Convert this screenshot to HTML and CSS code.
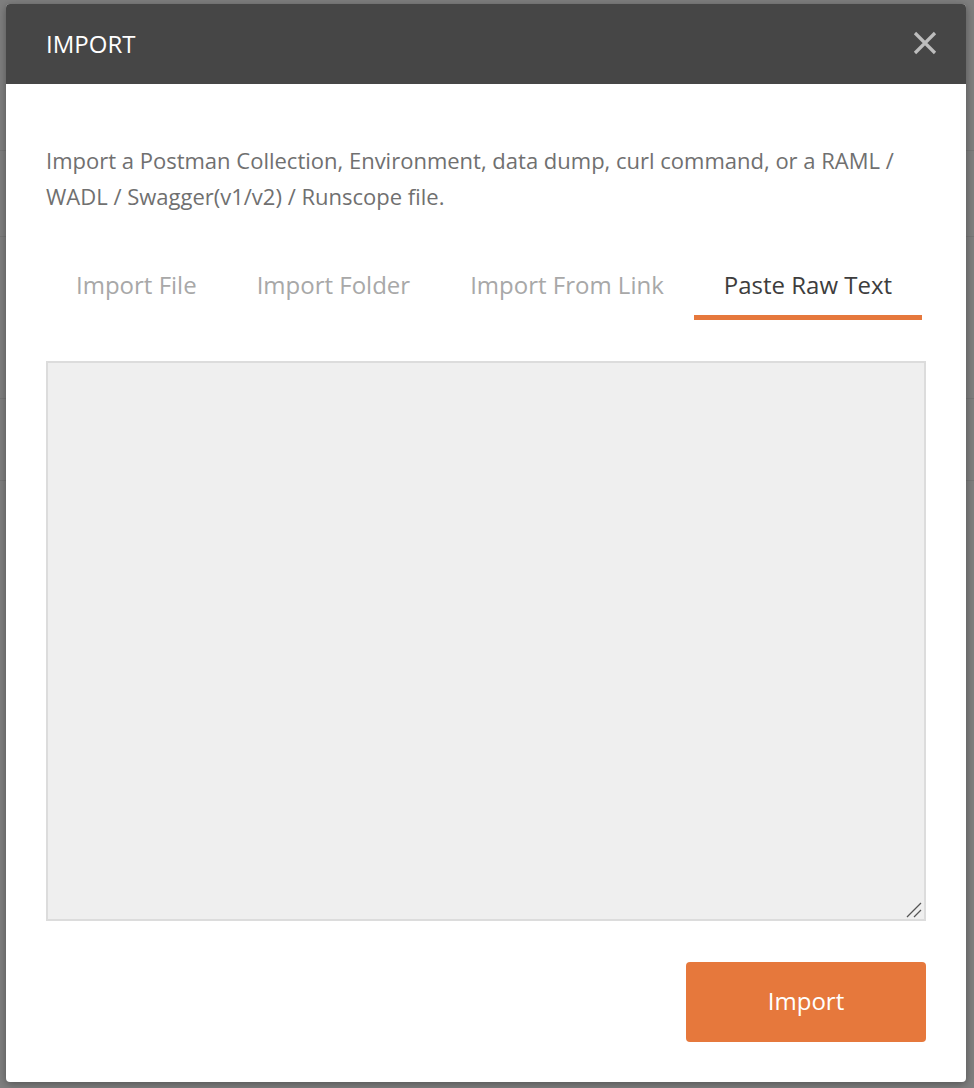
FILE: index.html
```html
<!DOCTYPE html>
<html lang="en">
<head>
<meta charset="utf-8">
<title>Import</title>
<link rel="stylesheet" href="styles.css">
</head>
<body>
<div class="backdrop">
  <div class="modal">
    <div class="modal-header">
      <span class="modal-title">IMPORT</span>
      <button class="close" aria-label="Close">
        <svg width="24" height="24" viewBox="0 0 24 24"><path d="M2 2 L22 22 M22 2 L2 22" stroke="#bdbdbd" stroke-width="3.2" fill="none"/></svg>
      </button>
    </div>
    <div class="modal-body">
      <p class="desc">Import a Postman Collection, Environment, data dump, curl command, or a RAML / WADL / Swagger(v1/v2) / Runscope file.</p>
      <div class="tabs">
        <div class="tab">Import File</div>
        <div class="tab">Import Folder</div>
        <div class="tab">Import From Link</div>
        <div class="tab active">Paste Raw Text</div>
      </div>
      <div class="raw-wrap">
        <textarea class="raw"></textarea>
        <svg class="grip" width="16" height="16" viewBox="0 0 16 16"><path d="M1 15 L15 1 M8 15 L15 8" stroke="#555" stroke-width="1.3" fill="none"/></svg>
      </div>
      <div class="actions">
        <button class="btn-import">Import</button>
      </div>
    </div>
  </div>
</div>
</body>
</html>
```
FILE: styles.css
```css
html, body {
  margin: 0;
  padding: 0;
}
body {
  background-color: #7f7f7f;
  background-image:
    linear-gradient(to bottom, transparent 150px, #767676 150px, #767676 151px, transparent 151px),
    linear-gradient(to bottom, transparent 236px, #767676 236px, #767676 237px, transparent 237px),
    linear-gradient(to bottom, transparent 398px, #767676 398px, #767676 399px, transparent 399px),
    linear-gradient(to bottom, transparent 480px, #767676 480px, #767676 481px, transparent 481px);
  font-family: "Open Sans", "Noto Sans", sans-serif;
  height: 1088px;
  overflow: hidden;
}
.backdrop {
  padding: 4px 0 0 6px;
}
.modal {
  width: 960px;
  background: #ffffff;
  border-radius: 4px;
  box-shadow: 0 2px 8px rgba(0, 0, 0, 0.35);
  overflow: hidden;
}
.modal-header {
  height: 80px;
  background: #464646;
  display: flex;
  align-items: center;
  justify-content: space-between;
  padding: 0 28px 0 40px;
}
.modal-title {
  color: #ffffff;
  font-size: 24px;
  line-height: 1;
  margin-top: -1px;
}
.close {
  background: none;
  border: 0;
  padding: 0;
  width: 26px;
  height: 26px;
  display: flex;
  align-items: center;
  justify-content: center;
  margin-top: -2px;
}
.modal-body {
  padding: 58px 40px 40px;
}
.desc {
  margin: 0;
  font-size: 22px;
  line-height: 36px;
  color: #707070;
}
.tabs {
  display: flex;
  margin-top: 54px;
}
.tab {
  font-size: 24px;
  line-height: 33px;
  padding: 0 30px 14px;
  color: #a8a8a8;
  border-bottom: 5px solid transparent;
}
.tab.active {
  color: #3d3d3d;
  border-bottom-color: #e6783c;
}
.raw-wrap {
  position: relative;
  width: 880px;
  margin-top: 41px;
}
.raw {
  display: block;
  box-sizing: border-box;
  width: 880px;
  height: 560px;
  margin: 0;
  border: 2px solid #dcdcdc;
  background: #efefef;
  font-family: "Open Sans", sans-serif;
  font-size: 16px;
  resize: none;
  outline: none;
}
.grip {
  position: absolute;
  right: 4px;
  bottom: 3px;
}
.actions {
  display: flex;
  justify-content: flex-end;
  margin-top: 41px;
}
.btn-import {
  width: 240px;
  height: 80px;
  border: 0;
  border-radius: 4px;
  background: #e6783c;
  color: #ffffff;
  font-family: "Open Sans", "Noto Sans", sans-serif;
  font-size: 24px;
  padding: 0 0 3px;
}
```
